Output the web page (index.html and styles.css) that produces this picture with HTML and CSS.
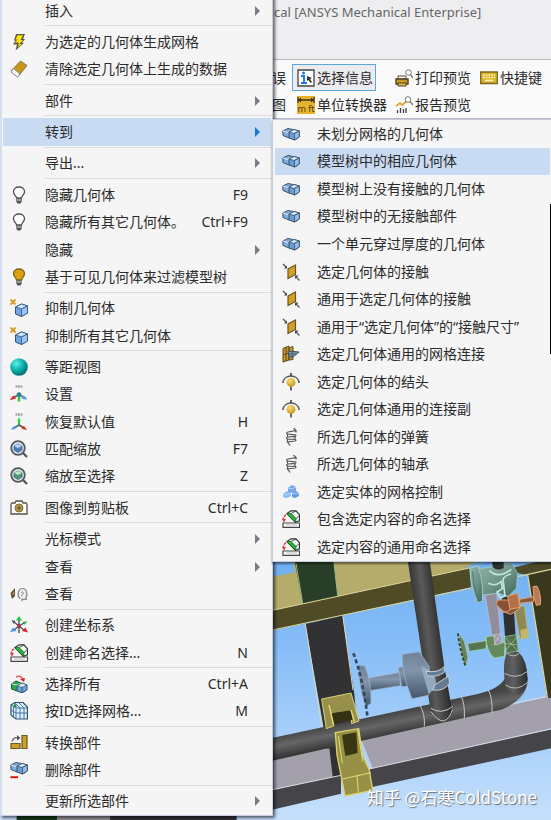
FILE: index.html
```html
<!DOCTYPE html>
<html lang="zh-CN">
<head>
<meta charset="utf-8">
<meta name="viewport" content="width=device-width, initial-scale=1">
<title>ANSYS Mechanical Enterprise</title>
<link rel="stylesheet" href="styles.css">
</head>
<body>
<svg class="sprite" aria-hidden="true">
  <defs>
    <radialGradient id="ball" cx=".35" cy=".3" r=".75"><stop offset="0" stop-color="#5ff0e6"/><stop offset=".45" stop-color="#12b9b5"/><stop offset="1" stop-color="#06686c"/></radialGradient>
    <radialGradient id="gold" cx=".4" cy=".3" r=".8"><stop offset="0" stop-color="#ffdf70"/><stop offset="1" stop-color="#c08a08"/></radialGradient>
  </defs>
  <symbol id="bolt" viewBox="0 0 18 18"><path d="M6 1h9l-2 5h2l-3 4h2l-8.500 7.500 1.500-6H3l2.500-4H4z" fill="#5a5a48"/><path d="M7.500 2.200h5.500l-2.500 4.800h2.500l-3.500 4h2l-3.500 3.500 1-5H5l2.500-3H5.500z" fill="#ffe500"/></symbol>
  <symbol id="eraser" viewBox="0 0 18 18"><path d="M10.500 1L17 5.500 8.500 16 1 11z" fill="#c9951a" stroke="#8b7650"/><path d="M3.500 8.500l6.500 5.500L7.500 17 1 12z" fill="#fff" stroke="#888"/></symbol>
  <symbol id="bulb" viewBox="0 0 18 18"><path d="M6.500 12C6.500 9.500 3.500 9 3.500 5.800 3.500 2.800 6 1 9 1s5.500 1.800 5.500 4.800c0 3.200-3 3.700-3 6.200z" fill="#fff" stroke="#4e4e4e" stroke-width="1.300"/><path d="M6.300 12.500h5.400v3L10.500 17.500h-3l-1.200-2z" fill="#555"/><path d="M7 14h4" stroke="#ddd"/></symbol>
  <symbol id="bulb-on" viewBox="0 0 18 18"><path d="M6.500 12C6.500 9.500 3.500 9 3.500 5.800 3.500 2.800 6 1 9 1s5.500 1.800 5.500 4.800c0 3.200-3 3.700-3 6.200z" fill="#d9a010" stroke="#7a651e" stroke-width="1.300"/><path d="M6.300 12.500h5.400v3L10.500 17.500h-3l-1.200-2z" fill="#555"/><path d="M7 14h4" stroke="#ddd"/></symbol>
  <symbol id="suppress" viewBox="0 0 18 18"><path d="M.5.500l5 5M5.500.500l-5 5" stroke="#d39a1c" stroke-width="1.800"/><path d="M5.500 8l6-3 6 2v7l-6 3.500-6-2.500z" fill="#6fa6e6" stroke="#32527c"/><path d="M5.500 8l6-3 6 2-6 3z" fill="#cfe3fa" stroke="#32527c" stroke-width=".8"/><path d="M11.500 10l6-3v7l-6 3.500z" fill="#9cc6f5" stroke="#32527c" stroke-width=".8"/></symbol>
  <symbol id="iso" viewBox="0 0 18 18"><circle cx="9" cy="9" r="8.800" fill="url(#ball)"/></symbol>
  <symbol id="set" viewBox="0 0 18 18"><path d="M5.500 1.500h7" stroke="#a8a8a8" stroke-width="2.500" stroke-dasharray="2 .5"/><path d="M9 10l-6 2.500" stroke="#3a6a88" stroke-width="1.500"/><path d="M1.500 14l2-2.500 1.500 1.500z" fill="#e22" stroke="#e22" stroke-width="1.500"/><path d="M9 10l6 2.500" stroke="#3a6a88" stroke-width="1.500"/><path d="M16.500 14l-3-2.500-1 1.500z" fill="#5b95ee" stroke="#5b95ee" stroke-width="1.500"/><path d="M9 10v6.500" stroke="#2fc945" stroke-width="2.500"/><circle cx="9" cy="9.500" r="2.300" fill="#297f80"/></symbol>
  <symbol id="restore" viewBox="0 0 18 18"><path d="M5.500 1.500h7" stroke="#a8a8a8" stroke-width="2.500" stroke-dasharray="2 .5"/><path d="M9 12V7" stroke="#27c63d" stroke-width="2"/><path d="M7 8l2-4 2 4z" fill="#35e04b"/><path d="M9 12l-5 3" stroke="#247f90" stroke-width="1.800"/><path d="M1 17l2.500-4 2 3z" fill="#5b9cf0"/><path d="M9 12l5 3" stroke="#7a4440" stroke-width="1.800"/><path d="M17 17l-5-1 2-3z" fill="#e81f1f"/></symbol>
  <symbol id="fit" viewBox="0 0 18 18"><circle cx="8" cy="8" r="6.800" fill="#dce6f2" stroke="#55585c" stroke-width="1.800"/><path d="M13 13l4 4" stroke="#55585c" stroke-width="2.400"/><path d="M4 6l4-2 4 2v4l-4 2.500L4 10z" fill="#4f7fb6" stroke="#385472" stroke-width=".7"/><path d="M4 6l4 2 4-2-4-2z" fill="#b6d4f4"/></symbol>
  <symbol id="zoomsel" viewBox="0 0 18 18"><circle cx="8" cy="8" r="6.800" fill="#dce6e8" stroke="#55585c" stroke-width="1.800"/><path d="M13 13l4 4" stroke="#55585c" stroke-width="2.400"/><path d="M4 6l4-2 4 2v4l-4 2.500L4 10z" fill="#4d987a" stroke="#385472" stroke-width=".7"/><path d="M4 6l4 2 4-2-4-2z" fill="#bcecd0"/></symbol>
  <symbol id="camera" viewBox="0 0 18 18"><path d="M1 5.500l1-1.500h3l1-2h6l1 2h3l1 1.500V15H1z" fill="#fff" stroke="#5a5245" stroke-width="1.300"/><circle cx="9" cy="9" r="4" fill="#b99635" stroke="#7d6c3a"/><circle cx="9" cy="9" r="1.500" fill="#555"/></symbol>
  <symbol id="look" viewBox="0 0 18 18"><path d="M.5 8l4.500-5v8l-3 3z" fill="#5c5238"/><path d="M2 9l2-3v4z" fill="#c6a14a"/><path d="M10 13.500C7 11 7.500 3.500 12.500 3.500 16 3.500 16.500 6 16.500 8l.7 2.500-1 .8v3H12v2" fill="#eee" stroke="#888" stroke-width="1.200"/><path d="M11 8c1-2 3-1 2 1l-2 2" fill="none" stroke="#888"/></symbol>
  <symbol id="csys" viewBox="0 0 18 18"><path d="M9 10V4M9 10l5-3M9 10L4 6M9 10l-5 4M9 10l5 4M9 10v7" stroke="#456" stroke-width="1.400"/><path d="M6 4.500L9 0l3 4.500z" fill="#28c83c"/><path d="M17 5l-2 4-2.500-3z" fill="#36b04c"/><path d="M1.500 4l4 1-2 3z" fill="#555"/><path d="M0 16l3-4.500 3.500 3.500z" fill="#4e8ff0"/><path d="M18 16.500l-6-1.500 3.500-3.500z" fill="#e82020"/><circle cx="9" cy="10" r="2" fill="#a33c38"/></symbol>
  <symbol id="named" viewBox="0 0 18 18"><path d="M1 13h16.500v4.300H1z" fill="#fff" stroke="#444" stroke-width="1.200"/><path d="M4 15h11" stroke="#bbb"/><path d="M5 3.500L9 .8h5l3.500 4v6l-4 1.500z" fill="#eefbee" stroke="#333" stroke-width="1.200"/><path d="M5 3.500h4l5 5-.5 3.800z" fill="#25b93b" stroke="#222" stroke-width=".8"/><path d="M5 3.500L13.500 12v-3L9 3.500z" fill="#25b93b"/><path d="M9 3.500l5-2.500M14 8.500l3.500-3" stroke="#333" stroke-width=".8"/><path d="M4 5c-2 1-3 3-2.500 6" fill="none" stroke="#e23b3b" stroke-width="1.500" stroke-dasharray="2.500 1"/><path d="M0 9l2 3.500L4 9z" fill="#e23b3b"/></symbol>
  <symbol id="selectall" viewBox="0 0 18 18"><path d="M6 2c4-2 6 0 7 3" fill="none" stroke="#f05a5a" stroke-width="1.500"/><path d="M10 4l5-1-1 4z" fill="#d81e1e"/><path d="M1.500 9L6 6l5 2v6l-4 2-5.500-2z" fill="#2aa848" stroke="#255239"/><path d="M2 9l5 1 4-2" fill="none" stroke="#bfeac8"/><path d="M7 11l5-3 5 2v5l-5 3-5-2z" fill="#6ea3df" stroke="#31506f"/><path d="M7 11l5 1.500 5-2.500-5-2z" fill="#d8eafd" stroke="#31506f" stroke-width=".7"/><path d="M12 12.500V18" stroke="#31506f"/></symbol>
  <symbol id="meshid" viewBox="0 0 18 18"><path d="M1 3l4-2.500h8L17.500 5v12H6l-5-4z" fill="#dceefe" stroke="#31506f" stroke-width="1.200"/><path d="M1 3l5 3h11M6 6v11M1 8l5 3h11M10 6v11M14 6v11M3.500 4.500V15M5 1l5 5M9 1l5 5" fill="none" stroke="#3a6a97" stroke-width=".9"/><path d="M3 5l2-4 2 4z" fill="#20903a"/></symbol>
  <symbol id="convert" viewBox="0 0 18 18"><path d="M1 9.500h9v5H1zM12 1.500h5v13h-5z" fill="#cda026" stroke="#6b5a28" stroke-width="1.200"/><path d="M2 7.500c1-4 4-4.500 7-3.500" fill="none" stroke="#666" stroke-width="1.300"/><path d="M7 1l3.500 3L7 6.500z" fill="#555"/></symbol>
  <symbol id="bodies" viewBox="0 0 18 18"><path d="M.8 6L6 3.500l5 1V11l-4 2-6-2.500z" fill="#7eadde" stroke="#38506a"/><path d="M.8 6l5 1.500L11 5" fill="none" stroke="#e4f1ff"/><path d="M7 7l5-2.500 5.300 1.500v6l-4.500 3L7 13z" fill="#6b9dd2" stroke="#38506a"/><path d="M7 7l5 1.500L17.300 6 12 4.500z" fill="#d6e9fc" stroke="#38506a" stroke-width=".8"/><path d="M12.500 8.500V15l4.800-3V6z" fill="#93bdeb" stroke="#38506a" stroke-width=".8"/></symbol>
  <symbol id="delete" viewBox="0 0 18 18"><use href="#bodies" y="-2" width="18" height="18"/><path d="M.5 16.200H8" stroke="#e01515" stroke-width="2"/></symbol>
  <symbol id="contact" viewBox="0 0 18 18"><path d="M6 6l7.500-4v9.500L6 15.500z" fill="#d3a021" stroke="#67552a" stroke-width="1.200"/><path d="M1 1l3 3M17.500 17.500L14 14" stroke="#555" stroke-width="1.300"/><path d="M5 2.500v3H2zM13 16v-3.500h3.500z" fill="#445"/></symbol>
  <symbol id="meshconn" viewBox="0 0 18 18"><path d="M1 3.500L7 1v14l-6 2zM7 3l4-1.500v13L7 15z" fill="#c99a25" stroke="#5b4a20"/><path d="M1 10l6-2M4 2v14" stroke="#5b4a20"/><path d="M6 6l11 1-6 5H7z" fill="#7296ae" stroke="#40505b"/><path d="M7 9h7M10 6.500V12" stroke="#40505b" stroke-width=".7"/></symbol>
  <symbol id="joint" viewBox="0 0 18 18"><path d="M.8 10C2 .8 16 .8 17.200 10" fill="none" stroke="#555" stroke-width="1.500"/><path d="M9 0v3M9 13v4.500" stroke="#444" stroke-width="1.600"/><circle cx="9" cy="9.500" r="4.400" fill="url(#gold)"/></symbol>
  <symbol id="spring" viewBox="0 0 18 18"><path d="M11.500 0L14 2.500 6 4Q3.500 5 5.500 6L13 6.800M14 2.500v2M13 6.800Q15 7.500 13 8.300L6 9Q3.500 10 5.500 11L13 11.500Q15 12.300 13 13L5.500 14l2.500 3.500M5.500 6v2.500M13 8v3M5.500 11v3" fill="none" stroke="#555" stroke-width="1.200"/></symbol>
  <symbol id="meshctl" viewBox="0 0 18 18"><path d="M1 11l4-3 4 2v3l-4 2-4-1z" fill="#8cbcf5"/><path d="M6 5l4-3 4 2v4l-4 2-4-1z" fill="#72a7ea"/><path d="M10 10l4-2 3 2v3l-4 2-3-1z" fill="#6499df"/><path d="M1 11l4 1 4-2M6 5l4 1 4-2M10 10l4 1 3-1" fill="none" stroke="#b5d4fa"/></symbol>
  <symbol id="info" viewBox="0 0 18 18"><path d="M1 1h16v16H1z" fill="#fff" stroke="#444" stroke-width="1.300"/><path d="M4 7h3v7M4 14h6" fill="none" stroke="#2377e8" stroke-width="2"/><circle cx="6.500" cy="4" r="1.500" fill="#2377e8"/><path d="M10 7l5 2-2 1 2 3-1.500 1-2-3-1.500 1z" fill="#333"/></symbol>
  <symbol id="print" viewBox="0 0 18 18"><path d="M3 7h8v3H3z" fill="#fff" stroke="#554820"/><path d="M1 10h12v5H1z" fill="#c99a25" stroke="#4d4222" stroke-width="1.400"/><path d="M3 14h8v3H3z" fill="#e6bd4a" stroke="#4d4222"/><circle cx="13.500" cy="3.500" r="2.800" fill="#fff" stroke="#777"/><path d="M15.500 5.500L18 9" stroke="#777" stroke-width="1.300"/></symbol>
  <symbol id="keys" viewBox="0 0 18 18"><path d="M.7 3h16.600v11.500H.7z" fill="#ddb529" stroke="#7c6520" stroke-width="1.300"/><path d="M3 6h12M3 8.500h12" stroke="#fff6c8" stroke-width="1.500" stroke-dasharray="1.700 1"/><path d="M5 11.500h8" stroke="#fff6c8" stroke-width="1.500"/></symbol>
  <symbol id="report" viewBox="0 0 18 18"><path d="M1 10l4-3 2 2 5-4" fill="none" stroke="#d9a52a" stroke-width="1.700"/><path d="M2.500 17v-3M5.500 17v-5M8.500 17v-4M11 17v-5" stroke="#444" stroke-width="1.300"/><circle cx="13" cy="3.500" r="2.800" fill="#fff" stroke="#777"/><path d="M15 5.500L18 9" stroke="#777" stroke-width="1.300"/></symbol>
</svg>

<div class="window">
  <header class="titlebar">cal [ANSYS Mechanical Enterprise]</header>
  <div class="toolbar" role="toolbar">
    <span>误</span>
    <button class="tool pressed"><svg><use href="#info"/></svg>选择信息</button>
    <button class="tool"><svg><use href="#print"/></svg>打印预览</button>
    <button class="tool"><svg><use href="#keys"/></svg>快捷键</button>
    <span>图</span>
    <button class="tool"><svg viewBox="0 0 18 18"><path d="M0 0h18v18H0z" fill="#e5b32c"/><path d="M1 4h16M1 1v6M17 1v6" stroke="#3c3318" stroke-width="1.300"/><path d="M1 4l3-2.500v5zM17 4l-3-2.500v5z" fill="#3c3318"/><text x="9" y="16" class="units-text">m ft</text></svg>单位转换器</button>
    <button class="tool"><svg><use href="#report"/></svg>报告预览</button>
  </div>
  <main class="viewport">
    <svg class="scene" viewBox="0 0 1653 780" role="img" aria-label="管道模型">
      <defs>
        <linearGradient id="sky" x2="0" y2="1"><stop offset="0" stop-color="#72aff0"/><stop offset=".3" stop-color="#84bcf8"/><stop offset="1" stop-color="#c6e0fc"/></linearGradient>
        <linearGradient id="pipeV" gradientUnits="userSpaceOnUse" x1="430" y1="200" x2="512" y2="190"><stop offset="0" stop-color="#303030"/><stop offset=".45" stop-color="#5a5a5a"/><stop offset="1" stop-color="#292929"/></linearGradient>
        <linearGradient id="pipeH" gradientUnits="userSpaceOnUse" x1="300" y1="470" x2="315" y2="545"><stop offset="0" stop-color="#444"/><stop offset=".4" stop-color="#666"/><stop offset="1" stop-color="#2b2b2b"/></linearGradient>
        <linearGradient id="steel" x2="0" y2="1"><stop offset="0" stop-color="#6f8297"/><stop offset=".4" stop-color="#8194aa"/><stop offset="1" stop-color="#45566a"/></linearGradient>
        <linearGradient id="mint" x2="1" y2="1"><stop offset="0" stop-color="#93b5aa"/><stop offset=".5" stop-color="#6f948a"/><stop offset="1" stop-color="#40665c"/></linearGradient>
        <linearGradient id="bend"><stop offset="0" stop-color="#4b4b4b"/><stop offset=".4" stop-color="#606060"/><stop offset="1" stop-color="#2c2c2c"/></linearGradient>
      </defs>
      <path d="M0 0H1653V780H0z" fill="url(#sky)"/>
      <path d="M50 760h122v20H50z" fill="#143c18"/><path d="M172 760h158v20H172z" fill="#99979f"/><path d="M330 760h380v20H330z" fill="#35343a"/>
      <g transform="translate(813 0)">
        <path d="M0 52L72 36 65 0H630L560 35 0 152z" fill="#b5ab6b"/>
        <path d="M0 152L595 24 600 82 0 212z" fill="#504b27"/>
        <path d="M0 152L595 24M0 211L600 84" stroke="#ded79a" stroke-width="3"/>
        <path d="M70 0h118l12 107-105 23z" fill="#283e29"/><path d="M188 0l12 107M75 10l20 120" stroke="#96ba7c" stroke-width="3"/>
        <path d="M103 192L214 167l36 235 20 240-85 15z" fill="#323234"/><path d="M103 192l50 310M216 170l30 220" stroke="#dedbb5" stroke-width="3" fill="none"/>
        <path d="M700 30L840-5V30L770 46z" fill="#4d4928"/>
        <path d="M770 44L840 27V490z" fill="#39381f"/><path d="M770 44L840 480M740 50l100-22" stroke="#d8d69f" stroke-width="4"/>
        <path d="M0 600L175 565l10 85L0 690zM270 535L825 412l15 3v90L305 625z" fill="#a3a0ac"/>
        <path d="M0 690L210 646v55L0 750zM290 628L840 507v58L300 682z" fill="#454449"/>
        <path d="M0 690L210 646M290 628L840 507M720 432l105-22" stroke="#dddce4" stroke-width="3"/>
        <path d="M0 535L620 402Q690 385 704 350L770 350Q775 415 690 449L0 603z" fill="url(#pipeH)"/>
        <path d="M410 0h66l44 320 25 140q-25 40-65 0L455 300z" fill="url(#pipeV)"/>
        <path d="M446 435q17 26 14 64M570 408q12 22 10 66M652 390q13 22 11 70M480 445q30 20 65-5M480 455q20 28 37 28 20-6 27-34" fill="none" stroke="#c8c8c8" stroke-width="3"/>
        <g stroke="#a4b7ca" stroke-width="2"><path d="M290 355l98-18v40l-94 15z" fill="url(#steel)"/><path d="M262 315l20 3q20 50 18 112l-15 10q-23-60-23-125z" fill="url(#steel)"/><path d="M382 323l25-5 5 60-20 2z" fill="url(#steel)"/><path d="M393 283l52-8 30 45-2 86-50 10q-30-70-30-133z" fill="url(#steel)"/><path d="M452 320l36 20 8 40-22 20z" fill="#93a9c0"/></g>
        <path d="M247 280q28 70 43 195" fill="none" stroke="#34475c" stroke-width="8" stroke-dasharray="12 8"/>
        <path d="M465 334q38 6 55-15v18q-22 16-51 10zM485 390q33 5 51-20l-3-22-42 27z" fill="#647b91" stroke="#c4d3df" stroke-width="3"/>
        <path d="M642 105l35-5 15 150-24 5z" fill="#928d9d" stroke="#c8c2ce" stroke-width="2"/>
        <path d="M730 145l30-8 12 95-25 5z" fill="#8d8a56" stroke="#c7bd72" stroke-width="2"/><path d="M748 210l22-6 4 28-24 5z" fill="#c3b66c"/>
        <path d="M693 110h33l12 180h-31z" fill="#303030"/>
        <path d="M708 280l35-4q27 28 26 80-2 35-30 50l-35-22q-12-75 4-104z" fill="url(#bend)"/>
        <path d="M701 340q35 20 67-5M703 375q34 22 67-8M708 280q20 15 37 0" fill="none" stroke="#b9b9b9" stroke-width="3"/>
        <path d="M597 24l25-6q18 50 12 106l-14 4q-22-46-23-104z" fill="url(#mint)" stroke="#9fcfbd" stroke-width="3"/>
        <path d="M622 26l36-4 24-12h40l18 30-4 45-24 24-30-10-48 6q2-44-12-79z" fill="url(#mint)" stroke="#a4d3c2" stroke-width="2"/>
        <path d="M662 0h36v24q-18 10-32-2z" fill="#2c302f"/>
        <path d="M655 32q28 26 66-4M652 70q22 10 36-4M690 62l4 24-16 10 10 18 14-6-6-50q6-12 24-16" fill="none" stroke="#c2e8da" stroke-width="5"/>
        <path d="M604 34q4 48 18 88" fill="none" stroke="#4e7769" stroke-width="3"/>
        <g stroke="#e3a070" stroke-width="3"><path d="M680 120h44l22 25-26 18q-25-5-44-30z" fill="#885137"/><path d="M710 108l30-8 7 42-30 6z" fill="#b66f45"/><path d="M746 118l42-8v15l-42 5z" fill="#815a43"/><path d="M786 80l12-2q14 28 10 56l-12 2q-10-26-10-56z" fill="#b97b55"/><path d="M680 148q18 18 40 0" fill="none"/></g>
        <g stroke="#abd9a1" stroke-width="2"><path d="M590 251l55-9v24l-50 8z" fill="#56744e"/><path d="M645 231l30-5 27 25-2 38-30 5q-24-20-25-63z" fill="#66895c"/><path d="M565 222l15 22 11 48-7 28q-18-40-19-98z" fill="#67805a"/><path d="M700 230l36-6 6 48-35 8z" fill="#54714d"/><path d="M700 230l38 40M740 228l-38 45M700 250l36 4" fill="none"/></g>
        <path d="M561 220q5 50 24 102" fill="none" stroke="#30472e" stroke-width="6" stroke-dasharray="9 6"/>
        <path d="M668 225l22-4 4 28-22 6zM668 225l26 24M690 221l-22 34" fill="#9b98a5" stroke="#d5d2df" stroke-width="2"/>
        <path d="M152 417l88-18 24 84-22 8-4-38-58 7 8 38-22 8z" fill="#96904c" stroke="#d9d16f" stroke-width="3"/><path d="M182 459l58-8 5 28-58 10z" fill="#353213"/><path d="M174 435l14 60M240 450l10 35" stroke="#e4da75" stroke-width="4"/>
        <path d="M193 518l70-12 12 80 20 45 10 60-83 17-24-123z" fill="#979148" stroke="#ddd36c" stroke-width="4"/><path d="M213 525l43-8 4 62-37 9z" fill="#393613"/><path d="M202 528l12 82M260 508l15 96M210 658l90-20M258 645l4 50" fill="none" stroke="#e5db75" stroke-width="3"/>
      </g>
    </svg>
    <p class="watermark">知乎 @石寒ColdStone</p>
  </main>
</div>

<div class="menu" role="menu">
  <button class="item" role="menuitem"><span class="label">插入</span><i class="arrow"></i></button>
  <hr>
  <button class="item" role="menuitem"><svg><use href="#bolt"/></svg><span class="label">为选定的几何体生成网格</span></button>
  <button class="item" role="menuitem"><svg><use href="#eraser"/></svg><span class="label">清除选定几何体上生成的数据</span></button>
  <hr>
  <button class="item" role="menuitem"><span class="label">部件</span><i class="arrow"></i></button>
  <hr>
  <button class="item active" role="menuitem"><span class="label">转到</span><i class="arrow"></i></button>
  <hr>
  <button class="item" role="menuitem"><span class="label">导出...</span><i class="arrow"></i></button>
  <hr>
  <button class="item" role="menuitem"><svg><use href="#bulb"/></svg><span class="label">隐藏几何体</span><kbd>F9</kbd></button>
  <button class="item" role="menuitem"><svg><use href="#bulb"/></svg><span class="label">隐藏所有其它几何体。</span><kbd>Ctrl+F9</kbd></button>
  <button class="item" role="menuitem"><span class="label">隐藏</span><i class="arrow"></i></button>
  <button class="item" role="menuitem"><svg><use href="#bulb-on"/></svg><span class="label">基于可见几何体来过滤模型树</span></button>
  <hr>
  <button class="item" role="menuitem"><svg><use href="#suppress"/></svg><span class="label">抑制几何体</span></button>
  <button class="item" role="menuitem"><svg><use href="#suppress"/></svg><span class="label">抑制所有其它几何体</span></button>
  <hr>
  <button class="item" role="menuitem"><svg><use href="#iso"/></svg><span class="label">等距视图</span></button>
  <button class="item" role="menuitem"><svg><use href="#set"/></svg><span class="label">设置</span></button>
  <button class="item" role="menuitem"><svg><use href="#restore"/></svg><span class="label">恢复默认值</span><kbd>H</kbd></button>
  <button class="item" role="menuitem"><svg><use href="#fit"/></svg><span class="label">匹配缩放</span><kbd>F7</kbd></button>
  <button class="item" role="menuitem"><svg><use href="#zoomsel"/></svg><span class="label">缩放至选择</span><kbd>Z</kbd></button>
  <hr>
  <button class="item" role="menuitem"><svg><use href="#camera"/></svg><span class="label">图像到剪贴板</span><kbd>Ctrl+C</kbd></button>
  <hr>
  <button class="item" role="menuitem"><span class="label">光标模式</span><i class="arrow"></i></button>
  <button class="item" role="menuitem"><span class="label">查看</span><i class="arrow"></i></button>
  <button class="item" role="menuitem"><svg><use href="#look"/></svg><span class="label">查看</span></button>
  <hr>
  <button class="item" role="menuitem"><svg><use href="#csys"/></svg><span class="label">创建坐标系</span></button>
  <button class="item" role="menuitem"><svg><use href="#named"/></svg><span class="label">创建命名选择...</span><kbd>N</kbd></button>
  <hr>
  <button class="item" role="menuitem"><svg><use href="#selectall"/></svg><span class="label">选择所有</span><kbd>Ctrl+A</kbd></button>
  <button class="item" role="menuitem"><svg><use href="#meshid"/></svg><span class="label">按ID选择网格...</span><kbd>M</kbd></button>
  <hr>
  <button class="item" role="menuitem"><svg><use href="#convert"/></svg><span class="label">转换部件</span></button>
  <button class="item" role="menuitem"><svg><use href="#delete"/></svg><span class="label">删除部件</span></button>
  <hr>
  <button class="item" role="menuitem"><span class="label">更新所选部件</span><i class="arrow"></i></button>
</div>

<div class="menu submenu" role="menu">
  <button class="item" role="menuitem"><svg><use href="#bodies"/></svg><span class="label">未划分网格的几何体</span></button>
  <button class="item active" role="menuitem"><svg><use href="#bodies"/></svg><span class="label">模型树中的相应几何体</span></button>
  <button class="item" role="menuitem"><svg><use href="#bodies"/></svg><span class="label">模型树上没有接触的几何体</span></button>
  <button class="item" role="menuitem"><svg><use href="#bodies"/></svg><span class="label">模型树中的无接触部件</span></button>
  <button class="item" role="menuitem"><svg><use href="#bodies"/></svg><span class="label">一个单元穿过厚度的几何体</span></button>
  <button class="item" role="menuitem"><svg><use href="#contact"/></svg><span class="label">选定几何体的接触</span></button>
  <button class="item" role="menuitem"><svg><use href="#contact"/></svg><span class="label">通用于选定几何体的接触</span></button>
  <button class="item" role="menuitem"><svg><use href="#contact"/></svg><span class="label">通用于“选定几何体”的“接触尺寸”</span></button>
  <button class="item" role="menuitem"><svg><use href="#meshconn"/></svg><span class="label">选定几何体通用的网格连接</span></button>
  <button class="item" role="menuitem"><svg><use href="#joint"/></svg><span class="label">选定几何体的结头</span></button>
  <button class="item" role="menuitem"><svg><use href="#joint"/></svg><span class="label">选定几何体通用的连接副</span></button>
  <button class="item" role="menuitem"><svg><use href="#spring"/></svg><span class="label">所选几何体的弹簧</span></button>
  <button class="item" role="menuitem"><svg><use href="#spring"/></svg><span class="label">所选几何体的轴承</span></button>
  <button class="item" role="menuitem"><svg><use href="#meshctl"/></svg><span class="label">选定实体的网格控制</span></button>
  <button class="item" role="menuitem"><svg><use href="#named"/></svg><span class="label">包含选定内容的命名选择</span></button>
  <button class="item" role="menuitem"><svg><use href="#named"/></svg><span class="label">选定内容的通用命名选择</span></button>
  <span class="edge"></span>
</div>
</body>
</html>
```
FILE: styles.css
```css
* {
  box-sizing: border-box;
}

body {
  margin: 0;
  overflow: hidden;
  color: #2b2b2b;
  font: 14px/20px "Noto Sans", "Noto Sans CJK SC", sans-serif;
}

button {
  margin: 0;
  padding: 0;
  border: 0;
  background: none;
  color: inherit;
  font: inherit;
  text-align: left;
  white-space: nowrap;
}

.sprite {
  position: absolute;
  width: 0;
  height: 0;
}

.units-text {
  fill: #4d3f16;
  font-size: 9px;
  text-anchor: middle;
}

.window {
  display: flex;
  flex-direction: column;
  min-height: 100vh;
}

.titlebar {
  height: 60px;
  padding: 2px 0 0 274px;
  border-bottom: 1px solid #b9b9bd;
  background: #eeeef0;
  color: #666;
  font-size: 13px;
  white-space: nowrap;
}

.toolbar {
  display: grid;
  grid-template-columns: 16px 84px 86px auto;
  justify-content: start;
  align-content: end;
  align-items: center;
  column-gap: 4px;
  height: 59px;
  padding-left: 272px;
  border-bottom: 1px solid #b9b9bd;
  background: #fafafa;
}

.tool {
  display: flex;
  align-items: center;
  gap: 2px;
  height: 27px;
  padding-left: 5px;
}

.tool:nth-child(3),
.tool:nth-child(7) {
  padding-left: 15px;
}

.tool:nth-child(4) {
  padding-left: 10px;
}

.tool svg,
.item svg {
  flex: none;
  width: 18px;
  height: 18px;
}

.pressed {
  padding-left: 4px;
  border: 1px solid #5aa7dc;
  background: #ececf0;
}

.viewport {
  display: flex;
  flex: 1;
  align-items: flex-end;
  position: relative;
  background: #72aff0;
}

.scene {
  display: block;
  width: 100%;
}

.watermark {
  position: absolute;
  right: 14px;
  bottom: 10px;
  margin: 0;
  color: #fff;
  font: 17px/26px "Noto Sans CJK SC", sans-serif;
  text-shadow: 1px 1px 1px #555c;
}

.menu {
  display: flex;
  flex-direction: column;
  position: absolute;
  top: -4px;
  left: 0;
  width: 273px;
  height: 100vh;
  border: 1px solid #c3cddf;
  border-left: 2px solid #d3deee;
  background: #f5f5f5;
  box-shadow: 2px 2px 3px #0009;
}

.item {
  display: flex;
  flex: 1 1 27px;
  align-items: center;
  min-height: 0;
  margin: 0 1px;
  padding: 0 11px 0 42px;
}

.item svg {
  margin: 0 17px 0 -35px;
}

.label {
  flex: 1;
}

.item kbd {
  margin-right: 12px;
  font: inherit;
}

.arrow {
  border: 5px solid transparent;
  border-right: 0;
  border-left-color: #747d88;
}

.active {
  background: #c8dbf3;
}

.active .arrow {
  border-left-color: #1479d0;
}

.menu hr {
  flex: none;
  width: calc(100% - 43px);
  height: 4px;
  margin: 0 0 0 43px;
  border: solid #f5f5f5;
  border-width: 1px 0 2px;
  background: #d9dce2;
}

.submenu {
  top: 119px;
  right: -2px;
  left: 272px;
  width: auto;
  height: 54vh;
  border-left: 1px solid #c3cddf;
  box-shadow: 0 2px 2px #0007;
}

.submenu .item {
  margin: 0 2px;
}

.edge {
  position: absolute;
  top: 19%;
  right: 1px;
  width: 1px;
  height: 34%;
  background: #000;
}
```
